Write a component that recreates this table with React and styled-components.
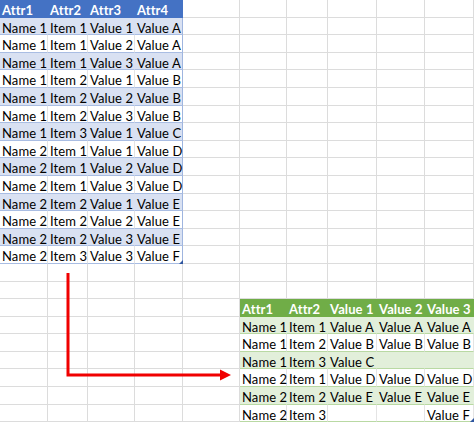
import React from "react";
import styled, { createGlobalStyle } from "styled-components";

const GlobalStyle = createGlobalStyle`
  html, body { margin: 0; padding: 0; background: #fff; overflow: hidden; }
  * { box-sizing: border-box; }
`;

const COLS = [48, 40, 47, 48, 57, 47, 41, 49, 48, 49];
const ROWS = 24;
const ROW_H = 17.6;

const TONES = {
  plain: { bg: "#fff", right: "#dcdcdc", bottom: "#dcdcdc", color: "#000", weight: 400 },
  blueHead: { bg: "#4472c4", right: "#4472c4", bottom: "#4472c4", color: "#fff", weight: 700 },
  blueBand: { bg: "#d9e1f2", right: "#d9e1f2", bottom: "#a9bde3", color: "#000", weight: 400 },
  blueRow: { bg: "#fff", right: "#e4e4e4", bottom: "#a9bde3", color: "#000", weight: 400 },
  greenHead: { bg: "#70ad47", right: "#70ad47", bottom: "#70ad47", color: "#fff", weight: 700 },
  greenBand: { bg: "#e2efda", right: "#e2efda", bottom: "#b9d9a3", color: "#000", weight: 400 },
  greenRow: { bg: "#fff", right: "#e4e4e4", bottom: "#b9d9a3", color: "#000", weight: 400 },
};

const Sheet = styled.div`
  position: relative;
  display: grid;
  grid-template-columns: ${COLS.map((c) => `${c}px`).join(" ")};
  grid-template-rows: repeat(${ROWS}, ${ROW_H}px);
  width: 474px;
  height: 423px;
  overflow: hidden;
  font-family: Lato, "Open Sans", "Liberation Sans", sans-serif;
  font-size: 13px;
`;

const Cell = styled.div`
  position: relative;
  background: ${(p) => TONES[p.$tone].bg};
  color: ${(p) => TONES[p.$tone].color};
  font-weight: ${(p) => TONES[p.$tone].weight};
  border-right: 1px solid ${(p) => (p.$edge ? p.$edge : TONES[p.$tone].right)};
  border-bottom: 1px solid ${(p) => TONES[p.$tone].bottom};
  padding: 3px 0 0 2px;
  line-height: 15px;
  white-space: nowrap;
  overflow: visible;
  letter-spacing: 0.1px;
`;

const Handle = styled.span`
  position: absolute;
  right: -1px;
  bottom: -1px;
  width: 0;
  height: 0;
  border-left: 4px solid transparent;
  border-bottom: 4px solid #2f56a0;
`;

const Arrow = styled.svg`
  position: absolute;
  left: 0;
  top: 0;
  pointer-events: none;
`;

const blueHeader = ["Attr1", "Attr2", "Attr3", "Attr4"];
const blueData = [
  ["Name 1", "Item 1", "Value 1", "Value A"],
  ["Name 1", "Item 1", "Value 2", "Value A"],
  ["Name 1", "Item 1", "Value 3", "Value A"],
  ["Name 1", "Item 2", "Value 1", "Value B"],
  ["Name 1", "Item 2", "Value 2", "Value B"],
  ["Name 1", "Item 2", "Value 3", "Value B"],
  ["Name 1", "Item 3", "Value 1", "Value C"],
  ["Name 2", "Item 1", "Value 1", "Value D"],
  ["Name 2", "Item 1", "Value 2", "Value D"],
  ["Name 2", "Item 1", "Value 3", "Value D"],
  ["Name 2", "Item 2", "Value 1", "Value E"],
  ["Name 2", "Item 2", "Value 2", "Value E"],
  ["Name 2", "Item 2", "Value 3", "Value E"],
  ["Name 2", "Item 3", "Value 3", "Value F"],
];

const greenHeader = ["Attr1", "Attr2", "Value 1", "Value 2", "Value 3"];
const greenData = [
  ["Name 1", "Item 1", "Value A", "Value A", "Value A"],
  ["Name 1", "Item 2", "Value B", "Value B", "Value B"],
  ["Name 1", "Item 3", "Value C", "", ""],
  ["Name 2", "Item 1", "Value D", "Value D", "Value D"],
  ["Name 2", "Item 2", "Value E", "Value E", "Value E"],
  ["Name 2", "Item 3", "", "", "Value F"],
];

function buildGrid() {
  const grid = [];
  for (let r = 0; r < ROWS; r++) {
    const row = [];
    for (let c = 0; c < COLS.length; c++) row.push({ text: "", tone: "plain" });
    grid.push(row);
  }
  blueHeader.forEach((t, c) => (grid[0][c] = { text: t, tone: "blueHead" }));
  blueData.forEach((rowData, i) => {
    rowData.forEach((t, c) => {
      grid[i + 1][c] = {
        text: t,
        tone: i % 2 === 0 ? "blueBand" : "blueRow",
        edge: c === 3 ? "#9fb5df" : undefined,
        handle: i === blueData.length - 1 && c === 3,
      };
    });
  });
  const gr = 17;
  const gc = 5;
  greenHeader.forEach((t, c) => (grid[gr][gc + c] = { text: t, tone: "greenHead" }));
  greenData.forEach((rowData, i) => {
    rowData.forEach((t, c) => {
      grid[gr + 1 + i][gc + c] = {
        text: t,
        tone: i % 2 === 0 ? "greenBand" : "greenRow",
        handle: i === greenData.length - 1 && c === 4,
      };
    });
  });
  return grid;
}

export default function App() {
  const grid = buildGrid();
  return (
    <>
      <GlobalStyle />
      <Sheet>
        {grid.map((row, r) =>
          row.map((cell, c) => (
            <Cell key={`${r}-${c}`} $tone={cell.tone} $edge={cell.edge}>
              {cell.text}
              {cell.handle && <Handle />}
            </Cell>
          ))
        )}
        <Arrow width="474" height="423" viewBox="0 0 474 423">
          <polyline
            points="68,273 68,375 222,375"
            fill="none"
            stroke="#f00000"
            strokeWidth="3"
          />
          <polygon points="220,369.5 231,375 220,380.5" fill="#f00000" />
        </Arrow>
      </Sheet>
    </>
  );
}
